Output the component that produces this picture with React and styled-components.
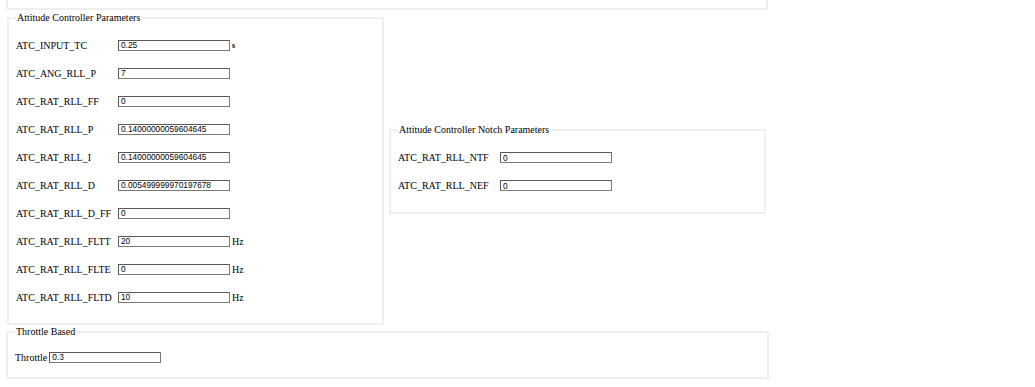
import styled, { createGlobalStyle } from 'styled-components';

const Global = createGlobalStyle`
  body {
    margin: 0;
    background: #fff;
    font-family: "Liberation Serif", "Times New Roman", serif;
    font-size: 10px;
    color: #000;
  }
`;

const Page = styled.div`
  width: 764px;
  padding: 0 0 0 5px;
  display: flex;
  flex-direction: column;
`;
const TopPanel = styled.div`
  height: 8px;
  margin: 0 1px 0 1px;
  border: 2px solid #efefef;
  border-top: none;
`;
const Columns = styled.div`
  display: grid;
  grid-template-columns: 381px 1fr;
  align-items: center;
  margin-top: 2px;
`;
const Box = styled.fieldset`
  margin: ${(p) => p.$margin || '0 2px'};
  padding: ${(p) => p.$pad || '7px 7px 12px'};
  border: 2px solid #efefef;
  min-width: 0;
`;
const Legend = styled.legend`
  padding: 0 1px;
  font-size: 10px;
  line-height: 12px;
`;
const Form = styled.div`
  display: grid;
  grid-template-columns: 102px auto 1fr;
  grid-auto-rows: 28px;
  align-items: center;
`;
const Label = styled.span`
  white-space: nowrap;
`;
const Input = styled.input`
  box-sizing: border-box;
  width: 112px;
  height: 11px;
  margin: 0;
  padding: 0 2px;
  border: 1px solid #7a7a7a;
  border-top-color: #5a5a5a;
  border-left-color: #5a5a5a;
  font-family: "Liberation Sans", Arial, sans-serif;
  font-size: 8.3px;
  color: #000;
  background: #fff;
`;
const Unit = styled.span`
  padding-left: 2px;
  font-size: ${(p) => (p.$small ? '8px' : '10px')};
  font-weight: ${(p) => (p.$small ? 'bold' : 'normal')};
`;
const Inline = styled.div`
  display: flex;
  align-items: center;
  gap: 2px;
  height: 20px;
`;

const attitude = [
  ['ATC_INPUT_TC', '0.25', 's'],
  ['ATC_ANG_RLL_P', '7'],
  ['ATC_RAT_RLL_FF', '0'],
  ['ATC_RAT_RLL_P', '0.14000000059604645'],
  ['ATC_RAT_RLL_I', '0.14000000059604645'],
  ['ATC_RAT_RLL_D', '0.005499999970197678'],
  ['ATC_RAT_RLL_D_FF', '0'],
  ['ATC_RAT_RLL_FLTT', '20', 'Hz'],
  ['ATC_RAT_RLL_FLTE', '0', 'Hz'],
  ['ATC_RAT_RLL_FLTD', '10', 'Hz'],
];

const notch = [
  ['ATC_RAT_RLL_NTF', '0'],
  ['ATC_RAT_RLL_NEF', '0'],
];

function Params({ rows }) {
  return (
    <Form>
      {rows.map(([name, value, unit]) => [
        <Label key={name + 'l'}>{name}</Label>,
        <Input key={name + 'i'} defaultValue={value} />,
        <Unit key={name + 'u'} $small={unit === 's'}>{unit || ''}</Unit>,
      ])}
    </Form>
  );
}

export default function App() {
  return (
    <Page>
      <Global />
      <TopPanel />
      <Columns>
        <Box>
          <Legend>Attitude Controller Parameters</Legend>
          <Params rows={attitude} />
        </Box>
        <Box $pad="8px 7px 12px" $margin="0 3px 0 3px">
          <Legend>Attitude Controller Notch Parameters</Legend>
          <Params rows={notch} />
        </Box>
      </Columns>
      <Box $pad="9px 7px 10px" $margin="1px 0 0 1px">
        <Legend>Throttle Based</Legend>
        <Inline>
          <Label>Throttle</Label>
          <Input defaultValue="0.3" />
        </Inline>
      </Box>
    </Page>
  );
}
